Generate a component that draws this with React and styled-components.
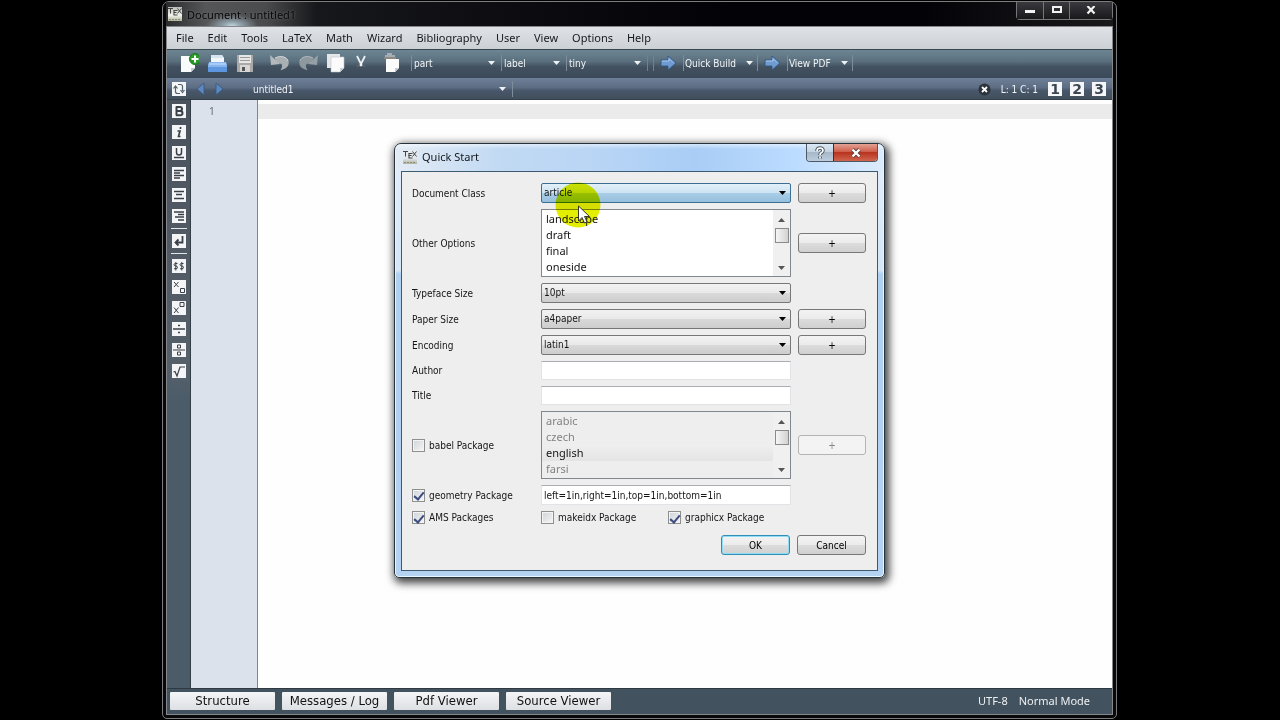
import React from "react";
import styled, { createGlobalStyle } from "styled-components";

const segoe = `"Noto Sans", "Open Sans", sans-serif`;
const tahoma = `"DejaVu Sans Condensed", "DejaVu Sans", sans-serif`;

const GlobalStyle = createGlobalStyle`
  * {
    box-sizing: border-box;
  }
  body {
    margin: 0;
    background: #000;
    font-family: ${segoe};
    font-size: 11px;
  }
  button, input, select {
    margin: 0;
    padding: 0;
    border: 0;
    border-radius: 0;
    background: none;
    color: inherit;
    font: inherit;
  }
  svg {
    display: block;
  }
`;

const Screen = styled.div`
  position: relative;
  display: flex;
  height: 100vh;
  min-height: 600px;
  padding: 1px 163px 1px 162px;
  background: #000;
`;

const Window = styled.div`
  flex: 1;
  display: flex;
  flex-direction: column;
  min-width: 0;
  padding: 0 3px 3px;
  border: 1px solid #7d7d80;
  border-radius: 7px 7px 5px 5px;
  background: #08080b;
`;

const TitleBar = styled.header`
  display: flex;
  align-items: flex-start;
  justify-content: space-between;
  height: 24px;
  background: radial-gradient(ellipse 26px 12px at 66px 24px, #c3d8e2 0, #8fa0a9 35%, transparent 100%),
    linear-gradient(90deg, #2b2c2d 0, #555657 40px, #4a4b4c 100px, #17181b 150px, #0e0e13 300px, #030307 560px, #030307 80%, #1a1a1d 100%);
`;

const AppTitle = styled.h1`
  display: flex;
  align-items: center;
  gap: 4px;
  height: 24px;
  margin: 0;
  padding-left: 1px;
  color: #08080a;
  font-size: 11px;
  font-weight: 400;
  text-shadow: 0 0 3px #77787a;
`;

const WindowButtons = styled.div`
  display: flex;
  height: 18px;
  border: 1px solid #77777b;
  border-top: 0;
  border-radius: 0 0 4px 4px;
`;

const WindowButton = styled.button`
  display: grid;
  place-items: center;
  width: ${(p) => (p.$wide ? 43 : 26)}px;
  background: linear-gradient(#3a3a3e, #19191c);
  & + & {
    border-left: 1px solid #77777b;
  }
`;

const Client = styled.div`
  flex: 1;
  display: flex;
  flex-direction: column;
  min-height: 0;
  border: 1px solid #85878a;
  background: #44525f;
`;

const MenuBar = styled.nav`
  display: flex;
  align-items: center;
  gap: 14px;
  height: 22px;
  padding: 0 9px 2px;
  background: linear-gradient(#dfe2e6, #ccd1d5);
  a {
    color: #17191c;
    text-decoration: none;
  }
`;

const ToolBar = styled.div`
  display: flex;
  align-items: center;
  height: 29px;
  padding: 0 0 2px 8px;
  border-top: 1px solid #39474f;
  background: linear-gradient(#6d8593, #5b707f 40%, #42515f 60%, #3c4a59);
  color: #f1f4f6;
  font-family: ${tahoma};
  font-size: 10px;
`;

const ToolGroup = styled.div`
  display: flex;
  margin-right: 7px;
  &:nth-of-type(2) {
    margin-right: 5px;
  }
`;

const ToolButton = styled.button`
  display: grid;
  place-items: center;
  width: 28px;
  height: 24px;
`;

const ComboBox = styled.div`
  display: flex;
  align-items: center;
  height: 16px;
  padding: 0 6px 0 2px;
  select {
    flex: 1;
    min-width: 0;
    appearance: none;
    outline: 0;
  }
`;

const ToolCombo = styled(ComboBox)`
  width: ${(p) => p.$width}px;
  border-left: 1px solid #7d8d9a;
`;

const FileCombo = styled(ComboBox)`
  width: 262px;
  border-right: 1px solid #7d8d9a;
`;

const Separator = styled.span`
  width: 7px;
  height: 16px;
  border: solid #71828f;
  border-width: 0 1px;
`;

const Runner = styled.div`
  display: flex;
  align-items: center;
  gap: 6px;
  height: 16px;
  padding-left: 6px;
  border-right: 1px solid #7d8d9a;
  button {
    height: 16px;
  }
`;

const RunnerLabel = styled.button`
  padding-left: 1px;
  border-left: 1px solid #7d8d9a;
`;

const RunnerArrow = styled.button`
  padding: 0 4px;
`;

const FileBar = styled.div`
  display: flex;
  align-items: center;
  height: 22px;
  padding: 1px 6px 0 5px;
  border-bottom: 1px solid #343f49;
  background: linear-gradient(#6d7f98, #5d6d83 45%, #48576a 60%, #414f5b);
  color: #f1f4f6;
  font-family: ${tahoma};
  font-size: 10px;
`;

const FileNav = styled.div`
  display: flex;
  align-items: center;
  gap: 10px;
  width: 79px;
`;

const FileInfo = styled.div`
  display: flex;
  align-items: center;
  gap: 8px;
  margin-left: auto;
  span {
    margin: 0 2px;
  }
`;

const ViewButton = styled.button`
  width: 14px;
  height: 14px;
  background: #f4f6f8;
  color: #3b4652;
  font-family: "DejaVu Sans", sans-serif;
  font-size: 14px;
  font-weight: 700;
  line-height: 14px;
`;

const Workspace = styled.main`
  flex: 1;
  display: flex;
  min-height: 0;
`;

const SideBar = styled.div`
  display: flex;
  flex-direction: column;
  align-items: center;
  gap: 5px;
  width: 24px;
  padding-top: 4px;
  border-right: 1px solid #343e47;
  background: linear-gradient(#4a525d, #56606b 270px, #4b5c68 300px);
`;

const SideGroup = styled.div`
  display: grid;
  gap: 7px;
`;

const SideDivider = styled.hr`
  width: 16px;
  height: 1px;
  margin: 0;
  border: 0;
  background: #e4e7ea;
`;

const Gutter = styled.div`
  width: 67px;
  padding: 3px 42px 0 0;
  border-right: 1px solid #5d9b7c;
  background: #dce2ec;
  color: #6c737c;
  line-height: 16px;
  text-align: right;
`;

const Editor = styled.div`
  flex: 1;
  padding-top: 4px;
  background: #fefefe;
`;

const CurrentLine = styled.div`
  height: 15px;
  background: #ebebeb;
`;

const StatusBar = styled.footer`
  display: flex;
  align-items: center;
  height: 26px;
  gap: 7px;
  padding: 0 22px 2px 3px;
  border-top: 1px solid #2e3840;
  background: #42525e;
  color: #eef1f3;
`;

const PanelButton = styled.button`
  width: 105px;
  height: 18px;
  border-radius: 1px;
  background: linear-gradient(#f4f5f7, #dddfe3);
  color: #111;
  font-family: ${tahoma};
  font-size: 13px;
  line-height: 18px;
`;

const Mode = styled.div`
  display: flex;
  gap: 11px;
  margin-left: auto;
`;

const Overlay = styled.div`
  position: absolute;
  inset: 0;
  display: grid;
  place-items: center;
  padding: 1px 1px 0 0;
`;

const Dialog = styled.section`
  position: relative;
  width: 491px;
  padding: 0 6px 6px;
  border: 1px solid #26333b;
  border-radius: 7px 7px 5px 5px;
  background: linear-gradient(#e4eefa 0, #d6e6f8 120px, #d9e8f6 126px, #b0d0ef 130px, #b4d2f1 100%);
  box-shadow: inset 0 0 0 1px #e9f5ff, 2px 3px 9px 2px rgba(0, 0, 0, 0.75);
`;

const DialogTitle = styled.header`
  display: flex;
  align-items: flex-start;
  justify-content: space-between;
  height: 27px;
  margin: 0 -5px;
  padding: 0 5px;
  border-radius: 6px 6px 0 0;
  background: linear-gradient(rgba(255, 255, 255, 0.5), transparent 5px),
    linear-gradient(90deg, #e3ebf5 0, #c2daf3 100px, #b9d5f5 200px, #a9cdf6 300px, #bcdcff 400px, #dcebfb 100%);
  h2 {
    display: flex;
    align-items: center;
    gap: 4px;
    height: 25px;
    margin: 0;
    padding-left: 1px;
    color: #15181c;
    font-size: 11px;
    font-weight: 400;
  }
`;

const CaptionButtons = styled.div`
  display: flex;
  height: 18px;
  border: 1px solid #4d5a66;
  border-top: 0;
  border-radius: 0 0 4px 4px;
  overflow: hidden;
`;

const CaptionButton = styled.button`
  display: grid;
  place-items: center;
  width: ${(p) => (p.$close ? 44 : 26)}px;
  background: ${(p) =>
    p.$close
      ? "linear-gradient(#e3a294, #cf5f4c 45%, #b8341f 50%, #d0654e)"
      : "linear-gradient(#dbe9f6, #c4d3e1 45%, #a6b8c9 50%, #bccddd)"};
  & + & {
    border-left: 1px solid #4d2a2a;
  }
`;

const DialogBody = styled.form`
  padding: 11px 11px 15px 10px;
  border: 1px solid #3d5a70;
  background: #eee;
  color: #151515;
  font-family: ${tahoma};
  font-size: 10px;
`;

const Fields = styled.div`
  display: grid;
  grid-template-columns: 122px 1fr 68px;
  gap: 6px 7px;
  align-items: center;
`;

const PlusButton = styled.button`
  grid-column: 3;
  height: 20px;
  border: 1px solid ${(p) => (p.disabled ? "#b4b4b4" : "#777")};
  border-radius: 3px;
  background: ${(p) => (p.disabled ? "#f3f3f3" : "linear-gradient(#f3f3f3, #ebebeb 48%, #dcdcdc 52%, #d0d0d0)")};
  color: ${(p) => (p.disabled ? "#888" : "#000")};
`;

const Combo = styled.div`
  display: flex;
  align-items: center;
  height: 20px;
  padding: 0 4px 1px 2px;
  border: 1px solid ${(p) => (p.$active ? "#3c6f94" : "#777")};
  border-radius: 2px;
  background: ${(p) =>
    p.$active
      ? "linear-gradient(#e2f0f9, #cde3f2 48%, #a9cde6 52%, #96bfdd)"
      : "linear-gradient(#f2f2f2, #e9e9e9 48%, #d9d9d9 52%, #cdcdcd)"};
  select {
    flex: 1;
    appearance: none;
    outline: 0;
  }
`;

const ListBox = styled.div`
  display: flex;
  height: 68px;
  border: 1px solid #828790;
  background: ${(p) => (p.$disabled ? "#eee" : "#fff")};
  select {
    flex: 1;
    height: 66px;
    padding: 1px 0;
    overflow: hidden;
    outline: 0;
    opacity: 1;
    font-family: ${segoe};
    font-size: 11px;
    scrollbar-width: none;
  }
  option {
    min-height: 16px;
    height: 16px;
    padding: 0 4px;
    color: ${(p) => (p.$disabled ? "#838383" : "#151515")};
    line-height: 16px;
  }
  option.current {
    background: linear-gradient(#efefef, #e4e4e4);
    color: #151515;
  }
`;

const ScrollTrack = styled.div`
  display: flex;
  flex-direction: column;
  align-items: center;
  width: 17px;
  padding: 8px 0 6px;
  background: #f0f0f0;
`;

const ScrollThumb = styled.div`
  width: 14px;
  height: 15px;
  margin: 6px 0 auto;
  border: 1px solid #8b8b8b;
  background: linear-gradient(90deg, #f5f5f5, #d2d2d2);
`;

const TextField = styled.input`
  width: 100%;
  height: ${(p) => (p.$tall ? 20 : 19)}px;
  padding: 0 2px;
  border: 1px solid #e2e3e6;
  border-top-color: #abadb3;
  background: #fff;
  outline: 0;
`;

const Check = styled.label`
  display: flex;
  align-items: center;
  gap: 4px;
  height: 13px;
  input {
    appearance: none;
    display: grid;
    place-items: center;
    width: 13px;
    height: 13px;
    border: 1px solid #8e8f8f;
    background: linear-gradient(135deg, #cfd3d8, #f6f6f6);
    box-shadow: inset 0 0 0 1px #f4f4f4;
  }
  input:checked::after {
    content: "";
    width: 4px;
    height: 8px;
    border: solid #3c4a80;
    border-width: 0 2px 2px 0;
    transform: rotate(40deg);
  }
`;

const PackagePair = styled.div`
  grid-column: 2 / 4;
  display: grid;
  grid-template-columns: 127px 1fr;
`;

const DialogActions = styled.div`
  display: flex;
  justify-content: flex-end;
  gap: 7px;
  margin-top: 11px;
`;

const ActionButton = styled(PlusButton)`
  width: 69px;
  ${(p) => p.$primary && "border-color: #2f8fb5; box-shadow: inset 0 0 0 1px #8fdcf5;"}
`;

const Halo = styled.div`
  position: absolute;
  left: 160px;
  top: 38px;
  mix-blend-mode: multiply;
  pointer-events: none;
`;

const Pointer = styled.div`
  position: absolute;
  left: 183px;
  top: 61px;
  pointer-events: none;
`;

const Down = ({ color = "#eef2f5" }) => (
  <svg width="7" height="4" viewBox="0 0 7 4">
    <path d="M0 0h7L3.500 4z" fill={color} />
  </svg>
);

const Up = () => (
  <svg width="7" height="4" viewBox="0 0 7 4">
    <path d="M0 4h7L3.500 0z" fill="#555" />
  </svg>
);

const TexLogo = ({ dark }) => (
  <svg width="16" height="16" viewBox="0 0 16 16">
    <defs>
      <linearGradient id={dark ? "texDark" : "texLight"} x2="0" y2="1">
        <stop offset="0" stopColor={dark ? "#b9bbb5" : "#e6eaee"} />
        <stop offset=".6" stopColor={dark ? "#f1f2ec" : "#e2e7ee"} />
        <stop offset="1" stopColor="#aeb19b" />
      </linearGradient>
    </defs>
    <path d="M1 1h14v14H1z" fill={`url(#${dark ? "texDark" : "texLight"})`} />
    <path d="M1 2.500h5M3.500 2.500v5M6.500 4.500h4M6.500 6.500h3M6.500 9h4M7 4.500v4.500M10.500 2.500l4 5M14.500 2.500l-4 5" stroke="#444" fill="none" />
    <path d="M2 13.500h12" stroke="#8d9077" strokeDasharray="2 1" />
  </svg>
);

const toolIcons = {
  New: (
    <>
      <path d="M2 3h14v12l-4 4H2z" fill="#f8fafb" />
      <path d="M16 15h-4v4z" fill="#c6ccd2" />
      <circle cx="16" cy="6" r="5.500" fill="#279b26" stroke="#177a19" />
      <path d="M16 2.500v7M12.500 6h7" stroke="#fff" strokeWidth="2" />
    </>
  ),
  Open: (
    <>
      <path d="M4 2h11l2 3v8H4z" fill="#f2f6fa" />
      <path d="M4 2h11l2 3H4z" fill="#d6e3f0" />
      <path d="M2 9h17l1 3v7H1v-7z" fill="#86b5ef" />
      <path d="M1 14h19v5H1z" fill="#5f96e0" />
      <path d="M2 11h17" stroke="#c9e0fb" />
    </>
  ),
  Save: (
    <>
      <path d="M2 2h16v17H2z" fill="#aaa9a7" />
      <path d="M4 2h12v8H4z" fill="#e7e7e5" />
      <path d="M5 4.500h10M5 7.500h10" stroke="#9b9b99" />
      <path d="M5 12h10v7H5z" fill="#d7d7d5" />
      <path d="M7 14h3v4H7z" fill="#555" />
    </>
  ),
  Undo: (
    <>
      <path d="M5 6c6-4 13-1 13 4 0 3-3 5-6 6 2-4 1-7-5-6" fill="#a9b0b4" stroke="#a9b0b4" strokeWidth="1.500" />
      <path d="M0 2l1 10 9-1z" fill="#b3b9bc" />
      <path d="M5 5c6-3 12-1 13 3" fill="none" stroke="#d3d6d8" />
    </>
  ),
  Redo: (
    <>
      <path d="M15 6C9 2 2 5 2 10c0 3 3 5 6 6-2-4-1-7 5-6" fill="#8d989f" stroke="#8d989f" strokeWidth="1.500" />
      <path d="M20 2l-1 10-9-1z" fill="#969fa5" />
      <path d="M15 5C9 2 3 4 2 8" fill="none" stroke="#b3bac0" />
    </>
  ),
  Copy: (
    <>
      <path d="M1 1h13v14H1z" fill="#e4e7e9" />
      <path d="M5 4h13v11l-4 4H5z" fill="#fbfbfb" stroke="#bfc5ca" strokeWidth=".6" />
      <path d="M18 15h-4v4z" fill="#c6ccd2" />
    </>
  ),
  Cut: (
    <>
      <path d="M3 3l5 10M11 3L6 13" stroke="#eef1f3" strokeWidth="1.800" />
      <path d="M3 14l2-2M9 12l2 2" stroke="#55606c" strokeWidth="2" />
    </>
  ),
  Paste: (
    <>
      <path d="M2 4h12v2H2z" fill="#8d8a84" />
      <path d="M5 1h5M3 3h10" stroke="#e1e1df" />
      <path d="M4 6h13v9l-4 4H4z" fill="#fbfbfb" />
      <path d="M17 15h-4v4z" fill="#c6ccd2" />
    </>
  ),
};

const ToolIcon = ({ name }) => (
  <ToolButton aria-label={name}>
    <svg width="20" height="20" viewBox="0 0 20 20">
      {toolIcons[name]}
    </svg>
  </ToolButton>
);

const RunArrow = () => (
  <svg width="17" height="16" viewBox="0 0 17 16">
    <path d="M1 5h7V1l8 7-8 7v-4H1z" fill="#6f9bd3" stroke="#31527f" strokeWidth=".8" />
    <path d="M2 6h7V3.500L13 7.500" fill="none" stroke="#a9c8ee" />
  </svg>
);

const sideIcons = {
  Bold: <path d="M4.500 2.500v9M4 3h4q2 0 2 2t-2 2H5M8 7q2.500 0 2.500 2.200T8 11.200H4" strokeWidth="2" />,
  Italic: <path d="M8.500 2v2M5.500 6h2.500L6.500 11.500H8.500" strokeWidth="1.700" />,
  Underline: <path d="M4.500 2v4.500Q4.500 9 7 9t2.500-2.500V2M2 11.500h10" strokeWidth="1.500" />,
  Left: <path d="M2 3.500h10M2 6h6M2 8.500h10M2 11h6" strokeWidth="1.300" />,
  Center: <path d="M2 3.500h10M4 6.500h6M2 10.500h10" strokeWidth="1.400" />,
  Right: <path d="M2 3h10M6 5.500h6M3 8h9M6 11h6" strokeWidth="1.300" />,
  Newline: <path d="M10.500 2v6.500H4M6.500 5.500l-3 3 3 3" strokeWidth="1.800" />,
  Math: <path d="M5.500 4.500H3.500Q2 4.500 2 5.700t1.800 1.300T5.500 8.500 4 9.700H2M3.800 3v8.500M11.500 4.500H9.500Q8 4.500 8 5.700t1.800 1.300 1.700 1.500T10 9.700H8M9.800 3v8.500" />,
  Subscript: <path d="M2 2l4.500 5M6.500 2L2 7M8.500 8.500h4v4h-4z" />,
  Superscript: <path d="M2 6.500l4.500 5.500M6.500 6.500L2 12M8 1.500h4v4H8z" />,
  Divide: <path d="M1 7h12M6 3.500h2M6 10.500h2" strokeWidth="1.500" />,
  Fraction: <path d="M1 7h12M5.500 2h3v3h-3zM5.500 9h3v3h-3z" />,
  Root: <path d="M1.500 8l1.500-.5L5 12l3-9h5" strokeWidth="1.200" />,
};

const sideGroups = [
  ["Bold", "Italic", "Underline", "Left", "Center", "Right"],
  ["Newline"],
  ["Math", "Subscript", "Superscript", "Divide", "Fraction", "Root"],
];

const SideIcon = ({ name }) => (
  <button aria-label={name}>
    <svg width="14" height="14" viewBox="0 0 14 14">
      <path d="M0 0h14v14H0z" fill="#f3f5f7" />
      <g fill="none" stroke="#3a4048">{sideIcons[name]}</g>
    </svg>
  </button>
);

const menus = ["File", "Edit", "Tools", "LaTeX", "Math", "Wizard", "Bibliography", "User", "View", "Options", "Help"];
const panels = ["Structure", "Messages / Log", "Pdf Viewer", "Source Viewer"];
const toolCombos = [
  { value: "part", width: 90 },
  { value: "label", width: 65 },
  { value: "tiny", width: 81 },
];

const ComboRow = ({ id, label, value, active, plus = true }) => (
  <>
    <label htmlFor={id}>{label}</label>
    <Combo $active={active}>
      <select id={id}>
        <option>{value}</option>
      </select>
      <Down color="#000" />
    </Combo>
    {plus ? <PlusButton type="button">+</PlusButton> : <span />}
  </>
);

const OptionList = ({ id, label, options, current, disabled }) => (
  <ListBox $disabled={disabled}>
    <select id={id} aria-label={label} size={4} disabled={disabled}>
      {options.map((option) => (
        <option key={option} className={option === current ? "current" : undefined}>
          {option}
        </option>
      ))}
    </select>
    <ScrollTrack>
      <Up />
      <ScrollThumb />
      <Down color="#555" />
    </ScrollTrack>
  </ListBox>
);

const CheckBox = ({ label, checked }) => (
  <Check>
    <input type="checkbox" defaultChecked={checked} />
    {label}
  </Check>
);

const QuickStart = () => (
  <Dialog role="dialog" aria-labelledby="quick-start">
    <DialogTitle>
      <h2 id="quick-start">
        <TexLogo />
        Quick Start
      </h2>
      <CaptionButtons>
        <CaptionButton aria-label="Help">
          <svg width="12" height="14" viewBox="0 0 12 14">
            <path d="M3 5q0-3 3-3t3 2.500Q9 6 7 7q-1 .5-1 2M6 10.500v2" fill="none" stroke="#4a5662" strokeWidth="3.600" />
            <path d="M3 5q0-3 3-3t3 2.500Q9 6 7 7q-1 .5-1 2M6 10.500v2" fill="none" stroke="#fff" strokeWidth="1.700" />
          </svg>
        </CaptionButton>
        <CaptionButton $close aria-label="Close">
          <svg width="12" height="10" viewBox="0 0 12 10">
            <path d="M2.500 1.500l7 7M9.500 1.500l-7 7" stroke="#5d3a38" strokeWidth="4" />
            <path d="M2.500 1.500l7 7M9.500 1.500l-7 7" stroke="#fff" strokeWidth="2.400" />
          </svg>
        </CaptionButton>
      </CaptionButtons>
    </DialogTitle>
    <DialogBody onSubmit={(e) => e.preventDefault()}>
      <Fields>
        <ComboRow id="class" label="Document Class" value="article" active />
        <label htmlFor="options">Other Options</label>
        <OptionList id="options" options={["landscape", "draft", "final", "oneside"]} />
        <PlusButton type="button">+</PlusButton>
        <ComboRow id="typeface" label="Typeface Size" value="10pt" plus={false} />
        <ComboRow id="paper" label="Paper Size" value="a4paper" />
        <ComboRow id="encoding" label="Encoding" value="latin1" />
        <label htmlFor="author">Author</label>
        <TextField id="author" />
        <span />
        <label htmlFor="title">Title</label>
        <TextField id="title" />
        <span />
        <CheckBox label="babel Package" />
        <OptionList label="Language" options={["arabic", "czech", "english", "farsi"]} current="english" disabled />
        <PlusButton type="button" disabled>+</PlusButton>
        <CheckBox label="geometry Package" checked />
        <TextField $tall aria-label="geometry options" defaultValue="left=1in,right=1in,top=1in,bottom=1in" />
        <span />
        <CheckBox label="AMS Packages" checked />
        <PackagePair>
          <CheckBox label="makeidx Package" />
          <CheckBox label="graphicx Package" checked />
        </PackagePair>
      </Fields>
      <DialogActions>
        <ActionButton $primary>OK</ActionButton>
        <ActionButton type="button">Cancel</ActionButton>
      </DialogActions>
    </DialogBody>
    <Halo>
      <svg width="46" height="46" viewBox="0 0 46 46">
        <circle cx="23" cy="23" r="22.500" fill="#e4ee00" />
      </svg>
    </Halo>
    <Pointer>
      <svg width="12" height="19" viewBox="0 0 12 19">
        <path d="M.5 1v15l3.500-3.500 2.500 5.500 2.500-1-2.500-5.500h5z" fill="#fff" stroke="#222" strokeWidth=".9" />
      </svg>
    </Pointer>
  </Dialog>
);

const App = () => (
  <>
    <GlobalStyle />
    <Screen>
      <Window>
        <TitleBar>
          <AppTitle>
            <TexLogo dark />
            Document : untitled1
          </AppTitle>
          <WindowButtons>
            <WindowButton aria-label="Minimize">
              <svg width="12" height="10" viewBox="0 0 12 10">
                <path d="M1 4h10v3H1z" fill="#f2f2f2" />
              </svg>
            </WindowButton>
            <WindowButton aria-label="Maximize">
              <svg width="12" height="10" viewBox="0 0 12 10">
                <path d="M2 1h8v5H2z" fill="none" stroke="#f2f2f2" strokeWidth="2" />
              </svg>
            </WindowButton>
            <WindowButton $wide aria-label="Close">
              <svg width="12" height="10" viewBox="0 0 12 10">
                <path d="M2.500 0l7 7.500M9.500 0l-7 7.500" stroke="#f2f2f2" strokeWidth="2.200" />
              </svg>
            </WindowButton>
          </WindowButtons>
        </TitleBar>
        <Client>
          <MenuBar>
            {menus.map((menu) => (
              <a key={menu} href="#">{menu}</a>
            ))}
          </MenuBar>
          <ToolBar>
            <ToolGroup>
              {["New", "Open", "Save"].map((name) => (
                <ToolIcon key={name} name={name} />
              ))}
            </ToolGroup>
            <ToolGroup>
              {["Undo", "Redo", "Copy", "Cut", "Paste"].map((name) => (
                <ToolIcon key={name} name={name} />
              ))}
            </ToolGroup>
            {toolCombos.map(({ value, width }) => (
              <ToolCombo key={value} $width={width}>
                <select aria-label={value}>
                  <option>{value}</option>
                </select>
                <Down />
              </ToolCombo>
            ))}
            <Separator />
            {["Quick Build", "View PDF"].map((label) => (
              <Runner key={label}>
                <button aria-label={`Run ${label}`}>
                  <RunArrow />
                </button>
                <RunnerLabel>{label}</RunnerLabel>
                <RunnerArrow aria-label={`${label} commands`}>
                  <Down />
                </RunnerArrow>
              </Runner>
            ))}
          </ToolBar>
          <FileBar>
            <FileNav>
              <button aria-label="Reload">
                <svg width="14" height="14" viewBox="0 0 14 14">
                  <path d="M0 0h14v14H0z" fill="#f3f5f7" />
                  <path d="M3.500 10V5M1.500 6.500l2-2.500 2 2.500M10.500 4v5M8.500 8l2 2.500 2-2.500M6 2.500h2.500q2 0 2 2M8 11.500H5.500q-2 0-2-2" fill="none" stroke="#55616d" strokeWidth="1.200" />
                </svg>
              </button>
              <button aria-label="Previous">
                <svg width="9" height="12" viewBox="0 0 9 12">
                  <path d="M8 0v12L1 6z" fill="#5d88c0" stroke="#35557f" strokeWidth=".8" />
                </svg>
              </button>
              <button aria-label="Next">
                <svg width="9" height="12" viewBox="0 0 9 12">
                  <path d="M1 0v12l7-6z" fill="#5d88c0" stroke="#35557f" strokeWidth=".8" />
                </svg>
              </button>
            </FileNav>
            <FileCombo>
              <select aria-label="Open file">
                <option>untitled1</option>
              </select>
              <Down />
            </FileCombo>
            <FileInfo>
              <button aria-label="Close file">
                <svg width="13" height="13" viewBox="0 0 13 13">
                  <circle cx="6.500" cy="6.500" r="6" fill="#2c333d" />
                  <path d="M4 4l5 5M9 4l-5 5" stroke="#fff" strokeWidth="1.800" />
                </svg>
              </button>
              <span>L: 1 C: 1</span>
              {[1, 2, 3].map((n) => (
                <ViewButton key={n}>{n}</ViewButton>
              ))}
            </FileInfo>
          </FileBar>
          <Workspace>
            <SideBar>
              {sideGroups.map((group, i) => (
                <React.Fragment key={group[0]}>
                  {i > 0 && <SideDivider />}
                  <SideGroup>
                    {group.map((name) => (
                      <SideIcon key={name} name={name} />
                    ))}
                  </SideGroup>
                </React.Fragment>
              ))}
            </SideBar>
            <Gutter>1</Gutter>
            <Editor>
              <CurrentLine />
            </Editor>
          </Workspace>
          <StatusBar>
            {panels.map((panel) => (
              <PanelButton key={panel}>{panel}</PanelButton>
            ))}
            <Mode>
              <span>UTF-8</span>
              <span>Normal Mode</span>
            </Mode>
          </StatusBar>
        </Client>
      </Window>
      <Overlay>
        <QuickStart />
      </Overlay>
    </Screen>
  </>
);

export default App;
